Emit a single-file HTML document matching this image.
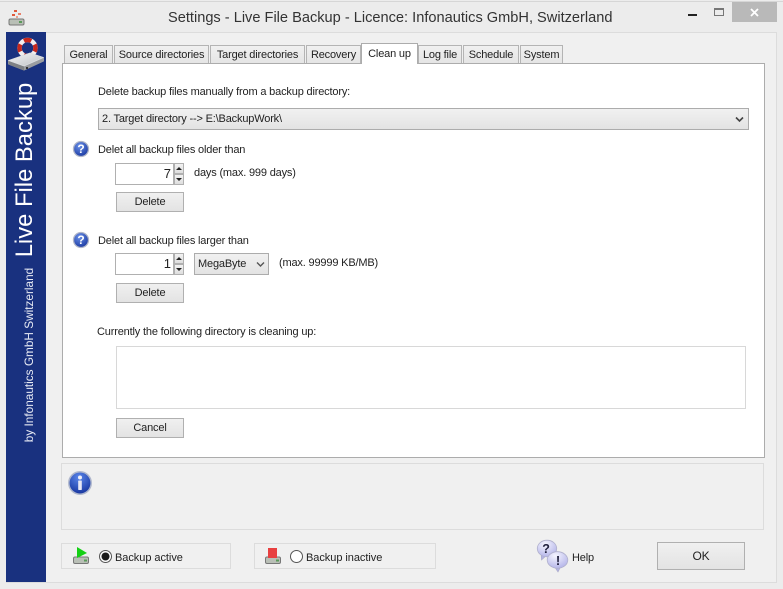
<!DOCTYPE html>
<html><head><meta charset="utf-8"><style>
html,body{margin:0;padding:0}
body{width:783px;height:589px;overflow:hidden;position:relative;background:#ececec;font-family:"Liberation Sans",sans-serif;font-size:11px;letter-spacing:-.17px;color:#222}
div,span{position:absolute;box-sizing:border-box;white-space:nowrap}
.t{line-height:14px}
.tab{top:45px;height:19px;background:linear-gradient(#f0f0f0,#e4e4e4);border:1px solid #b4b4b4;border-bottom:none;text-align:center;line-height:19px}
.btn{background:linear-gradient(#f0f0f0,#e3e3e3);border:1px solid #b0b0b0;text-align:center;line-height:19px}
.in{background:#fff;border:1px solid #b0b0b0;text-align:right;padding-right:2px;line-height:20px;font-size:13px;letter-spacing:0}
.spin{width:10px;height:10px;background:linear-gradient(#f2f2f2,#dedede);border:1px solid #b0b0b0}
</style></head><body>
<div style="left:0;top:1px;width:783px;height:1px;background:#d6d6d6"></div>
<svg style="position:absolute;left:7px;top:8px" width="18" height="18" viewBox="0 0 18 18"><rect x="2" y="11" width="15" height="6" rx="1.5" fill="#b9bfb6" stroke="#777"/><rect x="12" y="13" width="3" height="2" fill="#5a9a5a"/><rect x="7" y="2" width="3" height="2" fill="#e05a3c"/><rect x="11" y="5" width="3" height="2" fill="#e8806a"/><rect x="5" y="6" width="3" height="2" fill="#e05a3c"/><rect x="9" y="8" width="2" height="2" fill="#e8a090"/></svg>
<div class="t" style="left:168px;top:8px;font-size:14.6px;line-height:20px;color:#333;letter-spacing:0">Settings - Live File Backup - Licence: Infonautics GmbH, Switzerland</div>
<div style="left:688px;top:14px;width:9px;height:2px;background:#222"></div>
<div style="left:714px;top:8px;width:10px;height:8px;border:1px solid #777;border-top:2px solid #777"></div>
<div style="left:732px;top:2px;width:45px;height:20px;background:#b9b9b9"></div>
<svg style="position:absolute;left:749px;top:7px" width="11" height="11"><path d="M2 2L9 9M9 2L2 9" stroke="#fff" stroke-width="1.8"/></svg>
<div style="left:6px;top:32px;width:771px;height:551px;background:#f0f0f0;border:1px solid #dcdcdc"></div>

<div style="left:6px;top:32px;width:40px;height:550px;background:#19317f"></div>
<svg style="position:absolute;left:6px;top:36px" width="40" height="38" viewBox="0 0 40 38">
<defs><linearGradient id="d" x1="0" y1="0" x2="1" y2="1"><stop offset="0" stop-color="#f4f5f6"/><stop offset="1" stop-color="#bfc2c6"/></linearGradient></defs>
<circle cx="21.5" cy="12" r="8" fill="none" stroke="#f0eeee" stroke-width="4.4"/>
<circle cx="21.5" cy="12" r="8" fill="none" stroke="#c4281e" stroke-width="4.4" stroke-dasharray="7.5 5" stroke-dashoffset="3.7"/>
<path d="M2.5 25L24 17.5L37.5 22L37.5 25L18 34L2.5 28Z" fill="#9a9da1" stroke="#9a9da1" stroke-linejoin="round"/><path d="M2.5 24.5L24 17L37.5 21.5L18 30Z" fill="url(#d)" stroke="#dcdfe2" stroke-width=".8" stroke-linejoin="round"/><path d="M2.5 25L18 30.5V34.5L2.5 28.5Z" fill="#7e8185"/><rect x="20" y="31" width="2" height="2" fill="#333"/>
</svg>
<div style="left:25px;top:170px;transform:translate(-50%,-50%) rotate(-90deg);color:#fff;font-size:23.8px;line-height:28px;letter-spacing:0">Live File Backup</div>
<div style="left:29px;top:355px;transform:translate(-50%,-50%) rotate(-90deg);color:#e8ebf4;font-size:11.8px;line-height:14px;letter-spacing:0">by Infonautics GmbH Switzerland</div>

<div class="tab" style="left:64px;width:49px">General</div>
<div class="tab" style="left:114px;width:95px">Source directories</div>
<div class="tab" style="left:210px;width:95px">Target directories</div>
<div class="tab" style="left:306px;width:55px">Recovery</div>
<div class="tab" style="left:418px;width:44px">Log file</div>
<div class="tab" style="left:463px;width:56px">Schedule</div>
<div class="tab" style="left:520px;width:43px">System</div>
<div style="left:62px;top:63px;width:703px;height:395px;background:#fff;border:1px solid #acacac"></div>
<div style="left:361px;top:43px;width:57px;height:21px;background:#fff;border:1px solid #acacac;border-bottom:none;text-align:center;line-height:20px">Clean up</div>

<div class="t" style="left:98px;top:85px">Delete backup files manually from a backup directory:</div>
<div style="left:98px;top:108px;width:651px;height:22px;background:linear-gradient(#f1f1f1,#e3e3e3);border:1px solid #acacac;line-height:21px;padding-left:3px">2. Target directory --&gt; E:\BackupWork\</div>
<svg style="position:absolute;left:735px;top:116px" width="9" height="7"><path d="M1 1.5L4.5 5L8 1.5" fill="none" stroke="#444" stroke-width="1.6"/></svg>

<svg style="position:absolute;left:72px;top:140px" width="18" height="18" viewBox="0 0 18 18"><defs><radialGradient id="b" cx=".4" cy=".3" r=".8"><stop offset="0" stop-color="#6a90e8"/><stop offset="1" stop-color="#12309a"/></radialGradient></defs><circle cx="9" cy="9" r="7.5" fill="url(#b)" stroke="#b0b6c8" stroke-width="1.3"/><text x="9" y="13.2" text-anchor="middle" font-size="12" font-weight="bold" fill="#fff" font-family="Liberation Sans">?</text></svg>
<div class="t" style="left:98px;top:143px">Delet all backup files older than</div>
<div class="in" style="left:115px;top:163px;width:59px;height:22px">7</div>
<div class="spin" style="left:174px;top:163px;height:11px"></div><div class="spin" style="left:174px;top:174px;height:11px"></div>
<svg style="position:absolute;left:175px;top:165px" width="8" height="18"><path d="M1 5L4 2L7 5ZM1 13H7L4 16Z" fill="#222"/></svg>
<div class="t" style="left:194px;top:166px">days (max. 999 days)</div>
<div class="btn" style="left:116px;top:192px;width:68px;height:20px">Delete</div>

<svg style="position:absolute;left:72px;top:231px" width="18" height="18" viewBox="0 0 18 18"><circle cx="9" cy="9" r="7.5" fill="url(#b)" stroke="#b0b6c8" stroke-width="1.3"/><text x="9" y="13.2" text-anchor="middle" font-size="12" font-weight="bold" fill="#fff" font-family="Liberation Sans">?</text></svg>
<div class="t" style="left:98px;top:234px">Delet all backup files larger than</div>
<div class="in" style="left:115px;top:253px;width:59px;height:22px">1</div>
<div class="spin" style="left:174px;top:253px;height:11px"></div><div class="spin" style="left:174px;top:264px;height:11px"></div>
<svg style="position:absolute;left:175px;top:255px" width="8" height="18"><path d="M1 5L4 2L7 5ZM1 13H7L4 16Z" fill="#222"/></svg>
<div style="left:194px;top:253px;width:75px;height:22px;background:linear-gradient(#f1f1f1,#e3e3e3);border:1px solid #acacac;line-height:20px;padding-left:3px">MegaByte</div>
<svg style="position:absolute;left:256px;top:261px" width="9" height="7"><path d="M1 1.5L4.5 5L8 1.5" fill="none" stroke="#555" stroke-width="1.4"/></svg>
<div class="t" style="left:279px;top:256px">(max. 99999 KB/MB)</div>
<div class="btn" style="left:116px;top:283px;width:68px;height:20px">Delete</div>

<div class="t" style="left:97px;top:325px">Currently the following directory is cleaning up:</div>
<div style="left:116px;top:346px;width:630px;height:63px;background:#fff;border:1px solid #d8d8d8"></div>
<div class="btn" style="left:116px;top:418px;width:68px;height:20px">Cancel</div>

<div style="left:61px;top:463px;width:703px;height:67px;border:1px solid #dcdcdc"></div>
<svg style="position:absolute;left:67px;top:470px" width="26" height="26" viewBox="0 0 26 26"><defs><radialGradient id="c" cx=".45" cy=".25" r=".85"><stop offset="0" stop-color="#5a86ea"/><stop offset="1" stop-color="#0e2a94"/></radialGradient></defs><circle cx="13" cy="13" r="11.2" fill="url(#c)" stroke="#aeb6cc" stroke-width="1.5"/><circle cx="13" cy="7.5" r="2" fill="#f0f0f8"/><rect x="11.2" y="10.5" width="3.6" height="9.5" rx=".6" fill="#e8e8f4"/></svg>

<div style="left:61px;top:543px;width:170px;height:26px;border:1px solid #dcdcdc"></div>
<svg style="position:absolute;left:72px;top:546px" width="18" height="20" viewBox="0 0 18 20"><rect x="1.5" y="11" width="15" height="6.5" rx="1.5" fill="#b9bfb6" stroke="#777"/><rect x="12" y="13.5" width="3" height="2" fill="#5a9a5a"/><path d="M5 1L15 7L5 12Z" fill="#14d014"/></svg>
<svg style="position:absolute;left:98px;top:549px" width="15" height="15"><circle cx="7.5" cy="7.5" r="6" fill="#fff" stroke="#555"/><circle cx="7.5" cy="7.5" r="4" fill="#1a1a1a"/></svg>
<div class="t" style="left:115px;top:551px;letter-spacing:-.05px">Backup active</div>
<div style="left:254px;top:543px;width:182px;height:26px;border:1px solid #dcdcdc"></div>
<svg style="position:absolute;left:264px;top:546px" width="18" height="20" viewBox="0 0 18 20"><rect x="1.5" y="11" width="15" height="6.5" rx="1.5" fill="#b9bfb6" stroke="#777"/><rect x="12" y="13.5" width="3" height="2" fill="#5a9a5a"/><rect x="4" y="2" width="9" height="10" fill="#e84040"/></svg>
<svg style="position:absolute;left:289px;top:549px" width="15" height="15"><circle cx="7.5" cy="7.5" r="6" fill="#fff" stroke="#555"/></svg>
<div class="t" style="left:306px;top:551px;letter-spacing:-.05px">Backup inactive</div>

<svg style="position:absolute;left:535px;top:539px" width="35" height="34" viewBox="0 0 35 34"><defs><radialGradient id="h" cx=".4" cy=".25" r=".85"><stop offset="0" stop-color="#f4f4ff"/><stop offset="1" stop-color="#aeaee6"/></radialGradient></defs><path d="M6 14L6.5 21L12 16Z" fill="#b4b4e4" stroke="#a8a8c8" stroke-width=".6"/><ellipse cx="12" cy="9.5" rx="9.7" ry="8.3" fill="url(#h)" stroke="#b0b0cc" stroke-width=".8"/><path d="M19 27L23 33L26 27Z" fill="#b4b4e4" stroke="#a8a8c8" stroke-width=".6"/><ellipse cx="22.5" cy="21" rx="10.3" ry="8.3" fill="url(#h)" stroke="#b0b0cc" stroke-width=".8"/><text x="11" y="14" text-anchor="middle" font-size="12.5" font-weight="bold" fill="#222240" font-family="Liberation Sans">?</text><text x="23" y="26" text-anchor="middle" font-size="13" font-weight="bold" fill="#222240" font-family="Liberation Sans">!</text></svg>
<div class="t" style="left:572px;top:551px">Help</div>
<div class="btn" style="left:657px;top:542px;width:88px;height:28px;line-height:26px;font-size:12px">OK</div>
</body></html>
